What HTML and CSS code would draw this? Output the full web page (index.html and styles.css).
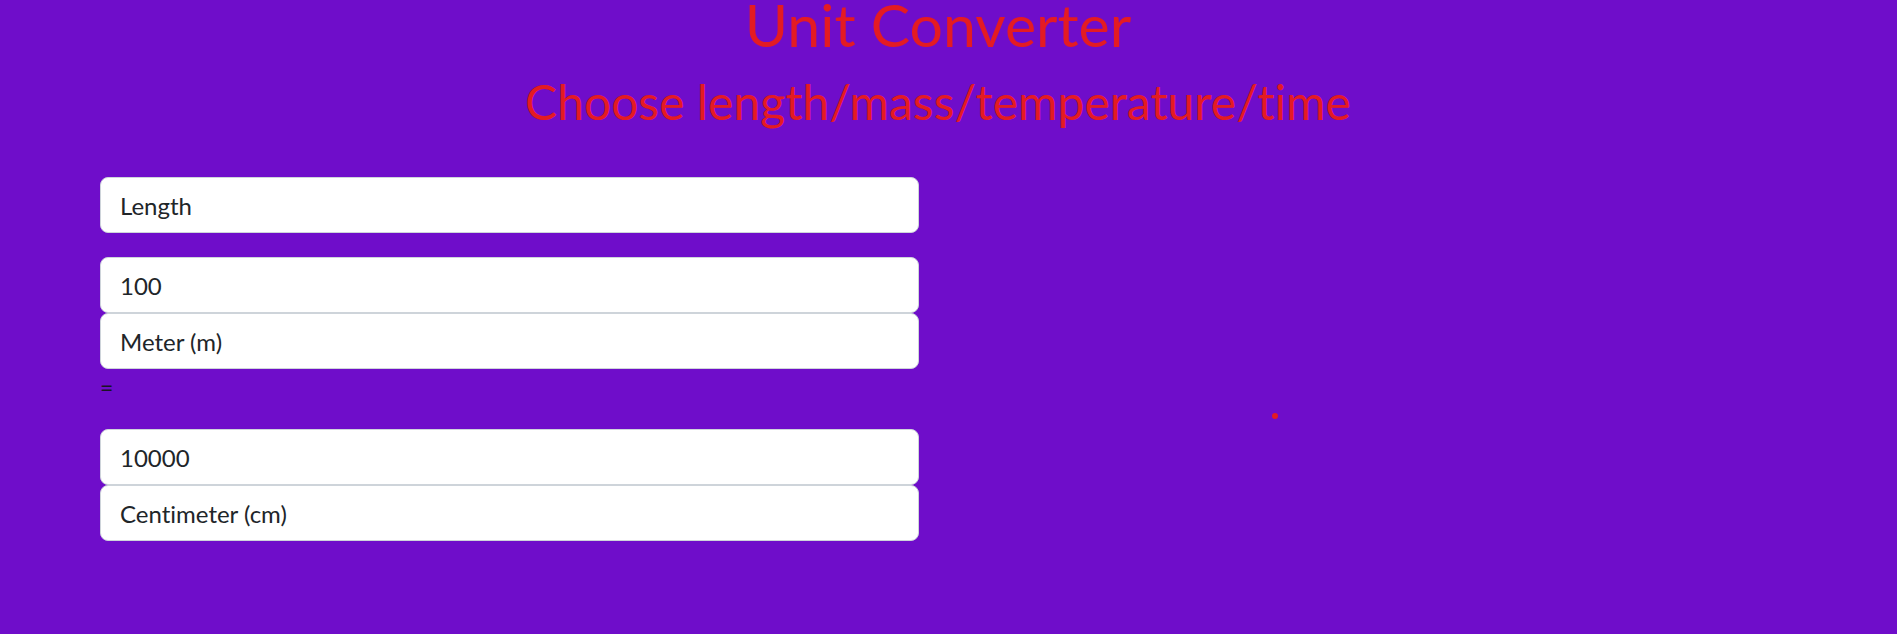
FILE: index.html
```html
<!DOCTYPE html>
<html lang="en">
<head>
<meta charset="utf-8">
<title>Unit Converter</title>
<link rel="stylesheet" href="styles.css">
</head>
<body>
  <header class="header">
    <h1 class="title">Unit Converter</h1>
    <h2 class="subtitle">Choose length/mass/temperature/time</h2>
  </header>
  <main class="layout">
    <section class="form">
      <select class="field field-single">
        <option>Length</option>
        <option>Mass</option>
        <option>Temperature</option>
        <option>Time</option>
      </select>
      <div class="group">
        <input class="field" type="text" value="100">
        <select class="field">
          <option>Meter (m)</option>
        </select>
      </div>
      <p class="equals">=</p>
      <div class="group">
        <input class="field" type="text" value="10000">
        <select class="field">
          <option>Centimeter (cm)</option>
        </select>
      </div>
    </section>
    <aside class="side">
      <span class="dot"></span>
    </aside>
  </main>
</body>
</html>
```
FILE: styles.css
```css
* { box-sizing: border-box; }

html, body {
  margin: 0;
  padding: 0;
  background: #6f0dca;
}

body {
  font-family: Lato, "Open Sans", sans-serif;
  font-variant-ligatures: none;
  font-feature-settings: "liga" 0, "clig" 0;
  color: #212529;
  height: 634px;
  overflow: hidden;
}

.header {
  text-align: center;
  padding-right: 21px;
}

.title {
  margin: 0;
  font-weight: 400;
  font-size: 59px;
  line-height: 50px;
  color: #e41b23;
}

.subtitle {
  margin: 23px 0 0;
  font-weight: 400;
  font-size: 48px;
  line-height: 58px;
  color: #e41b23;
}

.layout {
  display: grid;
  grid-template-columns: 819px 1fr;
  margin-top: 46px;
  padding-left: 100px;
}

.form {
  display: flex;
  flex-direction: column;
}

.group {
  display: flex;
  flex-direction: column;
}

.field {
  display: block;
  width: 100%;
  height: 56px;
  margin: 0;
  padding: 0 19px;
  font-family: Lato, "Open Sans", sans-serif;
  font-variant-ligatures: none;
  font-feature-settings: "liga" 0, "clig" 0;
  font-size: 24px;
  color: #212529;
  background: #fff;
  border: 1px solid #ced4da;
  border-radius: 8px;
  -webkit-appearance: none;
  appearance: none;
  outline: none;
}

.field-single {
  margin-bottom: 24px;
}

.equals {
  margin: 3px 0 26px;
  font-size: 23px;
  line-height: 31px;
  color: #1a1424;
}

.side {
  padding-top: 236px;
  padding-left: 353px;
}

.dot {
  display: block;
  width: 6px;
  height: 6px;
  border-radius: 50%;
  background: #e41b23;
}
```
